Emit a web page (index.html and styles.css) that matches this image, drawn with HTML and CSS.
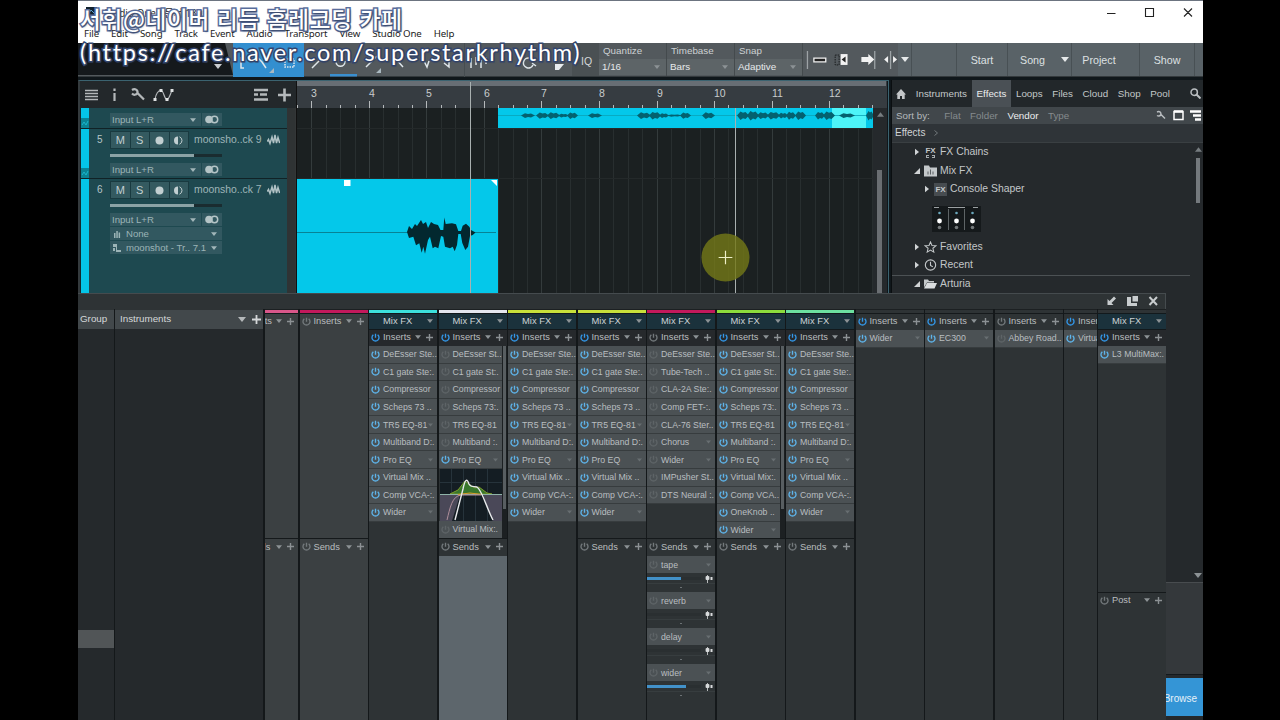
FILE: index.html
```
<!DOCTYPE html>
<html lang="ko">
<head>
  <meta charset="UTF-8" />
  <meta name="viewport" content="width=device-width, initial-scale=1" />
  <title>Studio One</title>
  <link rel="stylesheet" href="styles.css">
</head>
<body>

  <!-- shared icons -->
  <svg class="sprite" aria-hidden="true">
    <symbol id="i-power" viewBox="0 0 10 10"><path d="M2.6 1.9a3.9 3.9 0 1 0 4.8 0M5 .8v4.4" fill="none" stroke="currentColor" stroke-width="1.5"/></symbol>
    <symbol id="i-down" viewBox="0 0 8 5"><path d="M0 0h8L4 5z" fill="currentColor"/></symbol>
    <symbol id="i-plus" viewBox="0 0 10 10"><path d="M5 0v10M0 5h10" stroke="currentColor" stroke-width="2"/></symbol>
    <symbol id="i-right" viewBox="0 0 5 8"><path d="M0 0l5 4-5 4z" fill="currentColor"/></symbol>
    <symbol id="i-open" viewBox="0 0 6 6"><path d="M6 0v6H0z" fill="currentColor"/></symbol>
    <symbol id="i-stereo" viewBox="0 0 14 8"><circle cx="4" cy="4" r="3.8" fill="currentColor"/><circle cx="9.5" cy="4" r="3.2" fill="none" stroke="currentColor" stroke-width="1.5"/></symbol>
    <symbol id="i-wave" viewBox="0 0 13 12"><path d="M.3 7.5L1.500 5.500l1.500 4L5 3l1.500 6L8 1l1.500 8L11 3.500l1.700 5.500" fill="none" stroke="currentColor" stroke-width="1.500"/></symbol>
    <symbol id="i-send" viewBox="0 0 8 8"><path d="M2.5 0v8M1 1.5h3v3H1z" stroke="currentColor" stroke-width=".8" fill="currentColor"/><path d="M5.5 2h2v3h-2z" fill="currentColor"/></symbol>
  </svg>

  <div class="app">
    <header class="window-head">
      <div class="titlebar">
        <svg class="app-icon" viewBox="0 0 11 11"><path d="M0 0h11v11H0z" fill="#10202c"/><path d="M2 8l3-5 4 4" stroke="#5fa4d0" fill="none"/></svg>
        <span class="title">Studio One - 문서 130*</span>
        <svg class="window-buttons" viewBox="0 0 86 11"><path d="M0 6.5h8.5M38.500 1.5h8v8h-8zM77 1.5l8 8M85 1.5l-8 8" fill="none" stroke="#222" stroke-width="1.1"/></svg>
      </div>
      <nav class="menu">
        <span>File</span><span>Edit</span><span>Song</span><span>Track</span><span>Event</span><span>Audio</span><span>Transport</span><span>View</span><span>Studio One</span><span>Help</span>
      </nav>
    </header>

    <div class="toolbar">
      <div class="readout"><svg class="ico-down"><use href="#i-down"/></svg></div>
      <svg class="tools" viewBox="0 0 339 34">
        <path d="M0 0h71v34H0z" fill="#338fd0"/>
        <path d="M231.5 0v34" stroke="#464d51"/>
        <path d="M97 31h27v2.5H97z" fill="#3a8fd0"/>
        <g fill="none" stroke="#dfe6ea" stroke-width="1.5">
          <path d="M8 14v11h3M23 13l6 6 4 6M79 25l8-8M103 18c0 7 9 7 9 0M133 24l11-11M162 15l8 9M190 16l4 8 2-6M216 15v9l-5-4M238 25V15M243 22V14M248 25V17M253 21v-7M296 15a5 5 0 1 0 4 7M299 20l4 3"/>
          <path d="M52 16h9v8h-9z" stroke-dasharray="1.5 1"/>
        </g>
        <path d="M41 30v-5l-5 5zM148 30v-5l-5 5z" fill="#a9b8c0"/>
        <path d="M322 21h9l-5 6h-4z" fill="#e8ecee"/>
      </svg>
      <span class="iq">IQ</span>
      <div class="quantize">
        <label>Quantize</label><div class="pick">1/16<svg class="ico-down"><use href="#i-down"/></svg></div>
      </div>
      <div class="quantize">
        <label>Timebase</label><div class="pick">Bars<svg class="ico-down"><use href="#i-down"/></svg></div>
      </div>
      <div class="quantize">
        <label>Snap</label><div class="pick">Adaptive<svg class="ico-down"><use href="#i-down"/></svg></div>
      </div>
      <svg class="snap-tools" viewBox="0 0 96 34">
        <path d="M4.500 8v18M72.500 8v18M88.500 8v18" stroke="#9da3a6" stroke-width="1.3"/>
        <path d="M11 15h12v4H11z" fill="#222" stroke="#f2f2f2" stroke-width="1.3"/>
        <path d="M32.500 12h4v10h-4z" fill="none" stroke="#181b1d" stroke-dasharray="1.5 1"/>
        <path d="M38 11h7v11h-7z" fill="#f2f2f2"/><path d="M43 13.500v6l-4-3z" fill="#222"/>
        <path d="M59 14h7v-3l6 5.500-6 5.500v-3h-7z" fill="#f2f2f2"/>
        <path d="M86 13l-4 3.500 4 3.500zM91 13l4 3.500-4 3.500z" fill="#f2f2f2"/>
      </svg>
      <div class="pages">
        <span class="page caret"><svg class="ico-down"><use href="#i-down"/></svg></span>
        <span class="page blank"></span>
        <span class="page start">Start</span>
        <span class="page song">Song<svg class="ico-down"><use href="#i-down"/></svg></span>
        <span class="page project">Project</span>
        <span class="page show">Show</span>
        <span class="page"></span>
      </div>
    </div>

    <div class="workspace">
      <section class="editor">
        <div class="track-pane">
          <div class="track-tools">
            <svg viewBox="0 0 216 27">
              <path d="M5 9.500h13M5 12.500h13M5 15.500h13M5 18.500h13" stroke="#b4b8ba" stroke-width="1.6"/>
              <path d="M34.500 7.500V10M34.500 12v8" stroke="#b4b8ba" stroke-width="2.2"/>
              <path d="M52 9c3-2 6 0 5.500 3L64 18.500M52 12.500c2 2 4 1.500 5.500-.5" fill="none" stroke="#b4b8ba" stroke-width="2.2"/>
              <path d="M75 18.500c1-6 3-9 6-9 3 0 3 9 6 9 2 0 3-5 5-9" fill="none" stroke="#b4b8ba" stroke-width="1.2"/>
              <path d="M73.500 17h3v3h-3zM79.500 8h3v3h-3zM85.500 17h3v3h-3zM90.500 8h3v3h-3z" fill="#dfe2e3"/>
              <path d="M174 9h14M174 13.500h4M180 13.500h7M174 18.500h14" stroke="#b4b8ba" stroke-width="2.3"/>
              <path d="M204.500 7.500v13M198 14h13" stroke="#b4b8ba" stroke-width="2.6"/>
            </svg>
          </div>
          <div class="tracks" id="tracks"></div>
        </div>
        <div class="arrange">
          <svg class="ruler" id="ruler" viewBox="0 0 590 27"></svg>
          <div class="lanes">
            <svg class="grid" id="grid" viewBox="0 0 576 185"></svg>
            <div class="lane lane-a"><svg class="clip clip-a" viewBox="0 0 375 20">
              <path d="M334 0h34v20h-34z" fill="#4df4f8"/>
              <path d="M0 7.500h375" stroke="#0aa3b8" stroke-width=".8"/>
              <g id="smallWave" fill="#04616f"></g>
            </svg></div>
            <div class="lane lane-b"></div>
            <div class="lane lane-c"><svg class="clip clip-c" viewBox="0 0 201 114">
              <path d="M0 53.500h199" stroke="#087b8c" stroke-width=".9"/>
              <path d="M47 1h6.500v6H47zM194 1h6v6z" fill="#fff"/>
              <path fill="#03282f" d="M110 53L112 47 115 50 118 45 120 47 124 41 126 45 129 43 131 49 134 43 137 45 141 46 143.500 51H146.300L147.300 38.500 148.700 45 155 44.300 159 45.300 161.300 52H164L165.700 46.700 169 44.700 172.300 47.700 174 51 178.500 53.500 175.700 56 173 57 171 67.700 168.300 71 165.300 64 163.700 55H161.300L160 66 157.700 72.300 155.700 67.700 153 69.300 148 67.700 146.300 57.700 144 57 141.300 69.300 138 67.700 135.700 69.300 133 57.700 131 61 128 74.700 126.300 67.700 124.700 73.700 122.300 64.300 119 66.300 116.300 57.700 112 59z"/>
            </svg></div>
            <div class="playhead head-1"></div>
            <div class="playhead head-2"></div>
            <svg class="cursor" viewBox="0 0 50 50"><circle cx="25" cy="25" r="24.500" fill="#737817" fill-opacity=".82"/><path d="M25 18v14M18 25h14" stroke="#eef0c8" stroke-width="1.2"/></svg>
          </div>
          <div class="lane-scroll"><svg class="ico-up" viewBox="0 0 8 5"><path d="M0 5h8L4 0z" fill="#777d80"/></svg><i></i></div>
        </div>
      </section>

      <aside class="browser">
        <div class="tabs">
          <svg class="home" viewBox="0 0 10 10"><path d="M5 0l5 5.500H8.700V10H6V7H4v3H1.300V5.500H0z" fill="#c3c6c8"/></svg>
          <span>Instruments</span><span class="active">Effects</span><span>Loops</span><span>Files</span><span>Cloud</span><span>Shop</span><span>Pool</span>
          <svg class="search" viewBox="0 0 11 11"><circle cx="4.200" cy="4.200" r="3.200" fill="none" stroke="#b9bdc0" stroke-width="1.500"/><path d="M6.500 6.500l4 4" stroke="#b9bdc0" stroke-width="2"/></svg>
        </div>
        <div class="sort">
          <span class="lbl">Sort by:</span><span>Flat</span><span>Folder</span><span class="on">Vendor</span><span>Type</span>
          <svg viewBox="0 0 46 11"><path d="M2 2c2.500-1 4 0 4 2.500l4 4M2 5.500c1.500 1 3 .5 4-1" fill="none" stroke="#b9bdc0" stroke-width="1.500"/><path d="M19 1.500h9v8h-9z" fill="none" stroke="#fff" stroke-width="1.500"/><path d="M19 1.500h9" stroke="#fff" stroke-width="2.500"/><path d="M35 1.500h11M38 5.500h8M40 9.500h6" stroke="#fff" stroke-width="2.300"/></svg>
        </div>
        <div class="crumb">Effects<svg viewBox="0 0 4 6"><path d="M.5.5L3.500 3 .5 5.500" fill="none" stroke="#72787b"/></svg></div>
        <div class="tree">
          <div class="node"><svg class="tri"><use href="#i-right"/></svg><span class="fx-chain">FX<i></i></span>FX Chains</div>
          <div class="node"><svg class="tri open"><use href="#i-open"/></svg><svg class="ic" viewBox="0 0 13 11"><path d="M0 0h5l1 2h7v9H0z" fill="#c4c8ca"/><path d="M4 9V6M6.500 9V4M9 9V6" stroke="#5a5f62"/></svg>Mix FX</div>
          <div class="node child"><svg class="tri"><use href="#i-right"/></svg><span class="fx-box">FX</span>Console Shaper</div>
          <div class="shaper"><svg viewBox="0 0 50 29">
            <path d="M0 2h49v26H0z" fill="#15191b"/>
            <path d="M2 3.500h5M16 3.500h17M41 3.500h5" stroke="#9ba0a2"/>
            <path d="M16.500 5v21M32.500 5v21" stroke="#5e6466"/>
            <g fill="#fff"><circle cx="7.500" cy="17" r="2.400"/><circle cx="24.500" cy="17" r="2.400"/><circle cx="40.500" cy="17" r="2.400"/></g>
            <g fill="#6aa7bb"><circle cx="7.500" cy="9" r="1.300"/><circle cx="24.500" cy="9" r="1.300"/><circle cx="40.500" cy="9" r="1.300"/></g>
            <g fill="#74797b"><circle cx="7.500" cy="23.500" r="1.800"/><circle cx="24.500" cy="23.500" r="1.800"/><circle cx="40.500" cy="23.500" r="1.800"/></g>
          </svg></div>
          <div class="node"><svg class="tri"><use href="#i-right"/></svg><svg class="ic" viewBox="0 0 13 13"><path d="M6.500 1l1.600 3.900 4.200.3-3.200 2.700 1 4.100-3.600-2.200L2.900 12l1-4.100L.7 5.200l4.200-.3z" fill="none" stroke="#c4c8ca" stroke-width="1.100"/></svg>Favorites</div>
          <div class="node"><svg class="tri"><use href="#i-right"/></svg><svg class="ic" viewBox="0 0 13 13"><circle cx="6.500" cy="6.500" r="5.600" fill="none" stroke="#c4c8ca" stroke-width="1.200"/><path d="M6.500 3v4l2.500 1.500" fill="none" stroke="#c4c8ca" stroke-width="1.200"/></svg>Recent</div>
          <div class="node vendor"><svg class="tri open"><use href="#i-open"/></svg><svg class="ic" viewBox="0 0 13 11"><path d="M0 1h4l1 1.500h5V4H3L0 9z" fill="#c4c8ca"/><path d="M3 4.500h10L10.500 10H0z" fill="#dadddf"/></svg>Arturia</div>
          <div class="tree-scroll"><svg class="ico-up" viewBox="0 0 8 5"><path d="M0 5h8L4 0z" fill="#777d80"/></svg><i></i><svg class="ico-down"><use href="#i-down"/></svg></div>
        </div>
        <div class="info"></div>
        <div class="browse">Browse</div>
      </aside>
    </div>

    <section class="mixer">
      <div class="mixer-head">
        <svg viewBox="0 0 54 12"><path d="M1.500 10V4l2 2L8 1.500 10 3.500 5.500 8l2 2z" fill="#c8ccce"/><path d="M21 2h4v6h6v3H21zM26.500 1h5.500v5.500h-5.500z" fill="#c8ccce"/><path d="M43.500 2l7.500 8M51 2l-7.500 8" stroke="#c8ccce" stroke-width="2"/></svg>
      </div>
      <div class="mixer-body">
        <div class="groups"><h2>Group</h2><i></i></div>
        <div class="instruments"><h2>Instruments<svg class="ico-down"><use href="#i-down"/></svg><svg class="ico-plus"><use href="#i-plus"/></svg></h2></div>
        <div class="strips" id="strips"></div>
      </div>
    </section>

    <div class="watermark">
      <p class="name">서휘@네이버 리듬 홈레코딩 카페</p>
      <p class="url">(https://cafe.naver.com/superstarkrhythm)</p>
    </div>
  </div>

  <script src="script.js"></script>
</body>
</html>
```
FILE: styles.css
```
* {
  box-sizing: border-box;
}
body {
  margin: 0;
  background: #000;
  color: #c3c7c9;
  font-family: "Liberation Sans", Arial, sans-serif;
  font-size: 10px;
  line-height: 12px;
  overflow: hidden;
}
svg {
  display: block;
  flex: none;
}
.sprite {
  display: none;
}
h2, p {
  margin: 0;
}
.app {
  position: relative;
  width: 1125px;
  height: 720px;
  margin-left: 78px;
  background: #10171b;
  overflow: hidden;
  display: flex;
  flex-direction: column;
  white-space: nowrap;
}
.ico-down {
  width: 8px;
  height: 5px;
  color: #8c9295;
}
.ico-plus {
  width: 9px;
  height: 9px;
}

/* window header */
.window-head {
  height: 43px;
  flex: none;
  background: #fff;
  border-top: 1px solid #6c7480;
  color: #222;
}
.titlebar {
  height: 25px;
  display: flex;
  align-items: center;
  padding: 0 10px 2px 8px;
}
.app-icon {
  width: 11px;
  height: 11px;
  margin-right: 7px;
}
.title {
  font-family: "Open Sans", "Noto Sans CJK KR", sans-serif;
  font-size: 10px;
}
.window-buttons {
  width: 86px;
  height: 11px;
  margin-left: auto;
}
.menu {
  display: flex;
  gap: 12px;
  padding: 2px 0 0 6px;
  font-family: "Noto Sans", "Open Sans", sans-serif;
  font-size: 9.7px;
  letter-spacing: -0.12px;
}

/* toolbar */
.toolbar {
  height: 34px;
  flex: none;
  display: flex;
  background: #53595d;
  border-bottom: 1px solid #33393c;
}
.readout {
  width: 155px;
  background: #15191c;
  clip-path: polygon(0 0, 147px 0, 155px 32px, 0 32px);
  padding: 21px 0 0 136px;
}
.readout .ico-down {
  color: #c9cdd0;
}
.tools {
  width: 339px;
  height: 34px;
}
.iq {
  width: 27px;
  padding: 12px 0 0 9px;
  font-size: 10.5px;
  color: #d4d7d9;
  background: #4a5053;
}
.quantize {
  width: 68px;
  padding-top: 2px;
  font-size: 9.8px;
  color: #cdd1d3;
  border-right: 1px solid #444a4d;
}
.quantize label {
  display: block;
  padding-left: 4px;
}
.pick {
  display: flex;
  justify-content: space-between;
  align-items: center;
  height: 16px;
  margin-top: 2px;
  padding: 0 6px 0 3px;
  background: #5d6467;
  color: #e6e9ea;
}
.pick .ico-down {
  width: 6px;
  height: 4px;
}
.snap-tools {
  height: 34px;
  flex: 0 0 95px;
}
.pages {
  flex: 1;
  display: flex;
  background: #596267;
}
.page {
  display: flex;
  align-items: center;
  justify-content: center;
  font-size: 10.7px;
  color: #dde0e2;
  border-right: 1px solid #485054;
}
.page .ico-down {
  color: #e6e9ea;
}
.caret { width: 14px; }
.blank { width: 45px; }
.start { width: 51px; }
.song { width: 64px; gap: 16px; padding-left: 10px; }
.project { width: 68px; padding-right: 13px; }
.show { width: 55px; }
.page:last-child { border: 0; }

/* workspace */
.workspace {
  flex: 1;
  display: flex;
  padding-top: 3px;
  min-height: 0;
}
.editor {
  width: 811px;
  border: 1px solid #3b6370;
  border-left: 2px solid #343a3d;
  height: 216px;
  display: flex;
  flex: none;
}
.track-pane {
  width: 217px;
  border-right: 1px solid #111;
}
.track-tools {
  height: 27px;
  background: #23282b;
}
.track-tools svg {
  width: 216px;
  height: 27px;
}
.tracks {
  height: 188px;
  background: #333637;
}
.track {
  display: flex;
  width: 207px;
  background: #1e4950;
  border-bottom: 1px solid #112226;
  box-shadow: 8px 0 #2f3334;
}
.track-color {
  width: 9px;
  background: #04c5e8;
  border-left: 1px solid #14292e;
  display: flex;
  flex-direction: column;
  justify-content: flex-end;
}
.track-color svg {
  width: 8px;
  height: 10px;
  background: #0a8495;
}
.track-no {
  width: 21px;
  padding: 5px 0 0 8px;
  color: #b6c6c9;
}
.controls {
  width: 177px;
  padding-top: 2px;
}
.control-row {
  display: flex;
  align-items: center;
  color: #9fb5b8;
  font-size: 10.4px;
}
.buttons {
  display: flex;
  gap: 1px;
  width: 79px;
  height: 18px;
  padding: 1px;
  margin-right: 5px;
  background: #193a40;
}
.buttons b {
  flex: 1;
  display: flex;
  align-items: center;
  justify-content: center;
  background: #345a60;
  color: #c2cfd1;
  font-weight: normal;
  font-size: 11px;
}
.track-name {
  width: 73px;
}
.control-row .wave {
  width: 13px;
  height: 12px;
  color: #b0c1c4;
}
.volume {
  width: 112px;
  height: 3px;
  margin: 5px 0 6px;
  background: #1a2c30;
}
.volume i {
  display: block;
  width: 84px;
  height: 3px;
  background: #8ba3a6;
}
.input {
  display: flex;
  gap: 1px;
  height: 13px;
  margin-bottom: 1px;
  width: 112px;
  font-size: 9.6px;
  color: #9cb4b7;
}
.input span {
  flex: 1;
  display: flex;
  align-items: center;
  justify-content: space-between;
  padding: 0 5px 0 2px;
  background: #325860;
}
.input em {
  font-style: normal;
  flex: 1;
}
.input .src {
  width: 8px;
  height: 8px;
  margin: 0 5px 0 1px;
}
.input .ico-down {
  width: 6px;
  height: 4px;
  color: #a2b6b9;
}
.stereo {
  width: 20px;
  background: #325860;
  padding: 2px 3px;
}
.stereo svg {
  width: 14px;
  height: 9px;
  color: #b4c4c6;
}
.track-4 { height: 21px; }
.track-4 .controls { padding-top: 5px; }
.track-5 { height: 50px; }
.track-6 { height: 117px; }

.arrange {
  width: 590px;
  display: grid;
  grid-template: 27px 1fr / 576px 14px;
}
.ruler {
  grid-column: 1 / 3;
  width: 590px;
  height: 27px;
  font-size: 10.5px;
  background: #363c41;
}
.lanes {
  position: relative;
  background: #1b2021;
}
.grid {
  position: absolute;
  inset: 0;
  width: 576px;
  height: 185px;
}
.lane {
  position: relative;
}
.lane-a { height: 20px; padding-left: 201px; }
.lane-b { height: 51px; }
.lane-c { height: 116px; }
.clip {
  background: #04c8ea;
}
.clip-a {
  width: 375px;
  height: 20px;
}
.clip-c {
  width: 201px;
  height: 114px;
}
.playhead {
  position: absolute;
  top: -26px;
  width: 1px;
  height: 211px;
  background: #a9b0b0;
}
.head-1 { left: 173px; }
.head-2 { left: 438px; top: 0; height: 185px; }
.cursor {
  position: absolute;
  left: 404px;
  top: 125px;
  width: 49px;
  height: 49px;
}
.lane-scroll {
  background: #25292c;
  padding: 4px 4px 0;
}
.ico-up {
  width: 7px;
  height: 5px;
}
.lane-scroll i {
  display: block;
  width: 5px;
  height: 130px;
  margin-top: 53px;
  background: #6a6e72;
}

/* browser */
.browser {
  flex: 1;
  margin-left: 2px;
  border-left: 1px solid #0a0e10;
  display: flex;
  flex-direction: column;
  background: #25292c;
}
.tabs {
  display: flex;
  align-items: center;
  height: 27px;
  background: #22272a;
  font-size: 9.8px;
}
.tabs span {
  padding: 0 4.8px;
  line-height: 27px;
}
.tabs .active {
  background: #4a5055;
  color: #eceeef;
}
.home {
  width: 10px;
  height: 10px;
  margin: 0 5px 0 4px;
}
.search {
  width: 11px;
  height: 11px;
  margin: 0 2px 0 auto;
}
.sort {
  display: flex;
  align-items: center;
  height: 17px;
  padding: 0 2px 0 4px;
  gap: 9.5px;
  background: #41474b;
  color: #858b8e;
  font-size: 9.8px;
}
.sort .lbl {
  color: #b4b9bb;
  margin-right: 5px;
}
.sort .on {
  color: #eceeef;
}
.sort svg {
  width: 46px;
  height: 11px;
  margin-left: auto;
}
.crumb {
  display: flex;
  align-items: center;
  gap: 9px;
  height: 18px;
  padding-left: 3px;
  background: #2f3438;
  color: #d0d3d5;
}
.crumb svg {
  width: 4px;
  height: 6px;
}
.tree {
  position: relative;
  height: 440px;
  flex: none;
  border-top: 1px solid #3a3f42;
  font-size: 10.4px;
}
.node {
  display: flex;
  align-items: center;
  height: 18.5px;
  padding-left: 21px;
}
.child {
  padding-left: 31px;
}
.vendor {
  width: 298px;
  border-top: 1px solid #4c5154;
}
.tri {
  width: 4px;
  height: 8px;
  margin: 0 5px 0 2px;
  color: #d0d3d5;
}
.tri.open {
  width: 6px;
  height: 6px;
  margin: 0 4px 0 1px;
}
.ic {
  width: 13px;
  height: 12px;
  margin-right: 3px;
}
.fx-chain, .fx-box {
  width: 13px;
  margin-right: 3px;
  font-size: 8px;
  font-weight: bold;
  line-height: 8px;
  text-align: center;
}
.fx-chain i {
  display: block;
  height: 3px;
  margin: 0 2px;
  border: 1px dashed #a8adb0;
}
.fx-box {
  line-height: 13px;
  background: #474c50;
}
.shaper {
  height: 39px;
  padding: 5px 0 0 40px;
}
.shaper svg {
  width: 50px;
  height: 29px;
}
.tree-scroll {
  position: absolute;
  top: 4px;
  right: 1px;
  width: 8px;
  height: 431px;
  display: flex;
  flex-direction: column;
  align-items: center;
}
.tree-scroll i {
  width: 4px;
  height: 45px;
  margin: 6px 0 auto;
  background: #74797d;
}
.info {
  height: 93px;
  background: #34383b;
  border-top: 1px solid #484c4f;
  border-bottom: 1px solid #14191c;
}
.browse {
  height: 38px;
  margin: 3px 0 4px;
  padding: 15px 6px 0 0;
  text-align: right;
  background: #3495d6;
  color: #e6f1f8;
  font-size: 10px;
}

/* mixer window lies over the editor */
.mixer {
  position: absolute;
  left: 0;
  top: 293px;
  width: 1088px;
  height: 427px;
  background: #2e3335;
  border-top: 1px solid #454b4e;
  border-right: 1px solid #454b4e;
}
.mixer-head {
  height: 15px;
  padding-top: 1px;
}
.mixer-head svg {
  width: 54px;
  height: 12px;
  margin-left: 1028px;
}
.mixer-body {
  display: flex;
  height: 411px;
  background: #14181a;
}
.mixer-body h2 {
  display: flex;
  align-items: center;
  height: 19px;
  padding-left: 3px;
  padding-bottom: 1px;
  background: #42484b;
  color: #d4d7d9;
  font-size: 9.8px;
  font-weight: normal;
}
.groups, .instruments {
  background: #25292c;
  border-top: 1px solid #2e3335;
}
.groups {
  width: 36px;
  margin-right: 1px;
}
.groups h2 {
  padding-left: 2px;
}
.groups i {
  display: block;
  height: 18px;
  margin-top: 301px;
  background: #515557;
}
.instruments {
  width: 148px;
  margin-right: 2px;
}
.instruments h2 {
  padding: 0 2px 1px 5px;
}
.instruments h2 .ico-down {
  margin: 0 6px 0 auto;
  color: #b4b8ba;
}
.strips {
  width: 900px;
  display: flex;
}
.strip {
  width: 68px;
  flex: none;
  margin-right: 1.5px;
  display: flex;
  flex-direction: column;
  overflow: hidden;
  background: #2e3335;
}
.strip.grey {
  background: #3b4042;
}
.strip.cut-left {
  width: 33px;
  align-items: flex-end;
}
.strip.cut-right {
  width: 33px;
  margin-right: 1px;
}
.strip > * {
  width: 68px;
  flex: none;
}
.strip-color {
  height: 4px;
  border-top: 1px solid #1c2022;
}
.mixfx {
  display: flex;
  align-items: center;
  height: 17px;
  padding: 0 4px 2px 14px;
  justify-content: space-between;
  background: #1b323c;
  border-top: 1px solid #12191c;
  border-bottom: 1px solid #12191c;
  font-size: 9.4px;
  color: #cdd3d6;
}
.mixfx .ico-down {
  width: 6px;
  height: 4px;
}
.strip-head {
  display: flex;
  align-items: center;
  height: 17px;
  padding: 0 4px 2px 2px;
  font-size: 9.3px;
  color: #b9bdbf;
  border-top: 1px solid #15191b;
}
.strip-head .name {
  flex: 1;
}
.mixfx + .strip-head {
  background: #26292c;
  height: 16px;
  border-top: 0;
}
.strip-head .ico-down {
  width: 6px;
  height: 4px;
  margin-right: 5px;
}
.strip-head .ico-plus {
  width: 7px;
  height: 7px;
  color: #8c9194;
}
.power {
  width: 9px;
  height: 9px;
  margin-right: 3px;
  color: #73797c;
}
.power.on {
  color: #3397e8;
}
.inserts {
  height: 192px;
  display: flex;
}
.inserts.tall {
  height: 208px;
}
.insert-list {
  flex: 1;
  min-width: 0;
}
.insert {
  display: flex;
  align-items: center;
  height: 17.57px;
  padding-left: 2px;
  background: #4b5154;
  border-bottom: 1px solid #373c3e;
  font-size: 8.75px;
  color: #b9bec0;
  overflow: hidden;
}
.insert .power {
  color: #5e6467;
}
.insert .power.on {
  color: #5eb4ea;
}
.insert .ico-down {
  width: 5px;
  height: 4px;
  margin: 0 4px 0 auto;
  color: #686e71;
}
.eq {
  width: 62px;
  height: 52px;
  margin-left: 1px;
}
.scroll {
  width: 5px;
  padding-left: 1px;
  background: #1c2022;
}
.scroll i {
  display: block;
  width: 3px;
  height: 163px;
  background: #585e61;
}
.sends-head {
  height: 18px;
}
.selected-body {
  flex: 1;
  background: #5d666c;
}
.send {
  height: 36px;
}
.send .insert {
  height: 17px;
  border-bottom: 0;
}
.send-level {
  display: flex;
  align-items: center;
  height: 10px;
  margin-top: 1px;
  border-bottom: 1px solid #373d3f;
}
.level {
  width: 54px;
  height: 3px;
  margin-right: 4px;
  background: #2a2f31;
}
.level i {
  display: block;
  height: 3px;
  background: #4291c9;
}
.send-level svg {
  width: 8px;
  height: 8px;
  color: #d8dbdc;
}
.send-pan {
  width: 2px;
  height: 1px;
  margin: 3px 0 0 33px;
  background: #6c7275;
}
.inserts.post-gap {
  height: 246px;
}

/* channel name overlay */
.watermark {
  position: absolute;
  left: 2px;
  top: 5px;
  color: #fff;
  paint-order: stroke;
  text-shadow: 1px 1px 2px #33415f;
}
.watermark .name {
  font-family: "Noto Sans CJK KR", sans-serif;
  font-size: 22.5px;
  font-weight: 500;
  line-height: 26px;
  letter-spacing: 0.75px;
  -webkit-text-stroke: 3px #5b6f9e;
}
.watermark .url {
  margin-top: 7px;
  font-family: Lato, sans-serif;
  font-size: 23.5px;
  line-height: 28px;
  letter-spacing: 1.68px;
  -webkit-text-stroke: 3px #34466f;
}
```
FILE: script.js
```
const power = on => `<svg class="power${on ? ' on' : ''}"><use href="#i-power"/></svg>`;
const down = '<svg class="ico-down"><use href="#i-down"/></svg>';
const plus = '<svg class="ico-plus"><use href="#i-plus"/></svg>';

// ---- track list ----
const input = '<div class="input"><span>Input L+R' + down + '</span><div class="stereo"><svg><use href="#i-stereo"/></svg></div></div>';
const autoIcon = '<svg viewBox="0 0 8 10"><path d="M1 7l2-3 2 3 2-4" fill="none" stroke="#1ab6cc"/></svg>';

function trackHead(name) {
  return `<div class="control-row">
    <div class="buttons"><b>M</b><b>S</b>
      <b><svg width="9" height="9"><circle cx="4.5" cy="4.5" r="4" fill="currentColor"/></svg></b>
      <b><svg width="9" height="9"><path d="M4 .5a4 4 0 0 0 0 8z" fill="currentColor"/><path d="M5.5.8a4 4 0 0 1 0 7.4" fill="none" stroke="currentColor"/></svg></b>
    </div>
    <span class="track-name">${name}</span><svg class="wave"><use href="#i-wave"/></svg>
  </div><div class="volume"><i></i></div>`;
}

document.getElementById('tracks').innerHTML = `
  <div class="track track-4"><div class="track-color">${autoIcon}</div><div class="track-no"></div><div class="controls">${input}</div></div>
  <div class="track track-5"><div class="track-color">${autoIcon}</div><div class="track-no">5</div><div class="controls">${trackHead('moonsho..ck 9')}${input}</div></div>
  <div class="track track-6"><div class="track-color"></div><div class="track-no">6</div><div class="controls">${trackHead('moonsho..ck 7')}${input}
    <div class="input"><span><svg class="src" viewBox="0 0 8 8"><path d="M1 3h1.5v5H1zM3.3 1h1.5v7H3.3zM5.6 2.5h1.5V8H5.6z" fill="currentColor"/></svg><em>None</em>${down}</span></div>
    <div class="input"><span><svg class="src" viewBox="0 0 8 8"><path d="M0 0h4v3H0zM3 3h1v3h4v2H3zM0 4h2v3H0z" fill="currentColor"/></svg><em>moonshot - Tr.. 7.1</em>${down}</span></div>
  </div></div>`;

// ---- ruler and grid, four beats to a bar ----
const beat = 14.38;
let ruler = '<path d="M0 0h589v5H0z" fill="#686e74"/>';
let grid = '';
for (let i = 0; i <= 40; i++) {
  const x = Math.round(i * beat) + 0.5;
  const bar = i % 4 === 1;
  ruler += `<path d="M${x} ${bar ? 20 : 24}v8" stroke="#b5b9bb"/>`;
  if (bar) ruler += `<text x="${x - 0.5}" y="16" fill="#c8cccd">${3 + (i - 1) / 4}</text>`;
  if (i) grid += `<path d="M${x} 0v185" stroke="${bar ? '#343b3c' : '#282e2f'}"/>`;
}
document.getElementById('ruler').innerHTML = ruler;
document.getElementById('grid').innerHTML = grid + '<path d="M0 20.5h576M0 70.5h576" stroke="#24292a"/>';

// phrases of the vocal take: start, end, height
const phrases = [[24, 36, 2.5], [39, 50, 3.2], [50, 61, 3.5], [61, 70, 2], [70, 79, 3.4], [91, 103, 2.4],
  [140, 152, 3.5], [152, 162, 4], [162, 170, 2.5], [170, 183, 1.2], [183, 192, 3.2], [205, 216, 3.5],
  [240, 250, 4.5], [250, 260, 5], [260, 270, 3.6], [270, 281, 4], [281, 289, 3], [289, 297, 4.2],
  [298, 307, 4.5], [318, 326, 4], [326, 336, 4.5], [342, 356, 2.4], [369, 375, 5]];
document.getElementById('smallWave').innerHTML = phrases.map(([a, b, h]) => {
  const q = (b - a) / 4;
  return `<path d="M${a - 1} 7.5L${a + q} ${7.5 - h * 0.9} ${a + 2 * q} ${7.5 - h * 0.6} ${a + 3 * q} ${7.5 - h * 0.8} ${b + 1} 7.5 ${a + 3 * q} ${7.5 + h * 0.8} ${a + 2 * q} ${7.5 + h * 0.6} ${a + q} ${7.5 + h}z"/>`;
}).join('');

// ---- mixer strips ----
const chain = ['DeEsser Ste..', 'C1 gate Ste:.', 'Compressor', 'Scheps 73 ..', 'TR5 EQ-81', 'Multiband D:.', 'Pro EQ', 'Virtual Mix ..', 'Comp VCA-:.', 'Wider'];
const strips = [
  { color: '#d9578a', cls: 'grey cut-left', sends: [] },
  { color: '#c3195c', cls: 'grey', sends: [] },
  { color: '#3ce0dc', fx: 1, on: 1, list: chain },
  { color: '#e4e6ee', fx: 1, on: 1, cls: 'selected', scroll: 1, sends: [], eqAt: 6,
    list: ['DeEsser St..', 'C1 gate St:.', 'Compressor', 'Scheps 73:.', 'TR5 EQ-81', 'Multiband :.', 'Pro EQ', 'Virtual Mix:.'] },
  { color: '#c8e03a', fx: 1, on: 1, list: chain },
  { color: '#c8e03a', fx: 1, on: 1, list: chain, sends: [] },
  { color: '#c3195c', fx: 1, sends: [['tape', 34], ['reverb', 0], ['delay', 0], ['wider', 39]],
    list: ['DeEsser Ste..', 'Tube-Tech ..', 'CLA-2A Ste:.', 'Comp FET-:.', 'CLA-76 Ster..', 'Chorus', 'Wider', 'IMPusher St..', 'DTS Neural :.'] },
  { color: '#8cdc3c', fx: 1, on: 1, scroll: 1, sends: [],
    list: ['DeEsser St..', 'C1 gate St:.', 'Compressor', 'Scheps 73:.', 'TR5 EQ-81', 'Multiband :.', 'Pro EQ', 'Virtual Mix:.', 'Comp VCA..', 'OneKnob ..', 'Wider'] },
  { color: '#6ce0a0', fx: 1, on: 1, list: chain, sends: [] },
  { on: 1, list: ['Wider'] },
  { on: 1, list: ['EC300'] },
  { list: ['Abbey Road..'] },
  { on: 1, cls: 'cut-right', list: ['Virtual Mix'] },
  { fx: 1, on: 1, list: ['L3 MultiMax:.'], post: 1 }
];

const eq = `<svg class="eq" viewBox="0 0 62 52">
  <path d="M0 0h62v52H0z" fill="#141d23"/>
  <path d="M11.5 0v52M23.5 0v52M35.5 0v52M47.5 0v52M0 13.5h62" stroke="#26333b"/>
  <path d="M0 26h20L12 52H0zM43 26h19v26H53z" fill="#4a4858"/>
  <path d="M10 25l8-4 7-9 5 4 5 3 4-1 8 6 5 1z" fill="#38762c" stroke="#7c9a2a"/>
  <path d="M0 25.5h62" stroke="#8fb3a8"/><path d="M18 25.5q12-3 24 0" stroke="#d99a2e" fill="none"/>
  <path d="M7 51c3-12 5-24 14-25h20" fill="none" stroke="#b08f9c"/>
  <path d="M15 51l8-31c2-10 4-11 6-5 2 4 5 2 8 3 5 3 10 22 16 33" fill="none" stroke="#e8eaec" stroke-width="1.4"/>
</svg>`;

const head = (name, on, cls = '') => `<div class="strip-head ${cls}">${power(on)}<span class="name">${name}</span>${down}${plus}</div>`;

// long names have no room for the arrow
function insert(name, on, narrow) {
  const full = /[.:]$/.test(name) || name.length > (narrow ? 8 : 9);
  return `<div class="insert">${power(on)}${name}${full ? '' : down}</div>`;
}

function strip(s) {
  const rows = (s.list || []).map((name, i) => {
    const on = s.eqAt !== undefined ? i === s.eqAt : s.on;
    return insert(name, on, s.scroll) + (i === s.eqAt ? eq : '');
  }).join('');
  let html = `<div class="strip ${s.cls || ''}"><div class="strip-color"${s.color ? ` style="background:${s.color}"` : ''}></div>`;
  if (s.fx) html += `<div class="mixfx">Mix FX${down}</div>`;
  html += head('Inserts', s.on);
  const size = s.post ? 'post-gap' : s.fx ? '' : 'tall';
  html += `<div class="inserts ${size}"><div class="insert-list">${rows}</div>${s.scroll ? '<div class="scroll"><i></i></div>' : ''}</div>`;
  if (s.sends) {
    html += head('Sends', false, 'sends-head');
    html += s.sends.map(([name, level]) => `<div class="send">${insert(name, false)}
      <div class="send-level"><div class="level"><i style="width:${level}px"></i></div><svg><use href="#i-send"/></svg></div>
      <div class="send-pan"></div></div>`).join('');
    if (s.cls === 'selected') html += '<div class="selected-body"></div>';
  }
  if (s.post) html += head('Post', false);
  return html + '</div>';
}
document.getElementById('strips').innerHTML = strips.map(strip).join('');
```
